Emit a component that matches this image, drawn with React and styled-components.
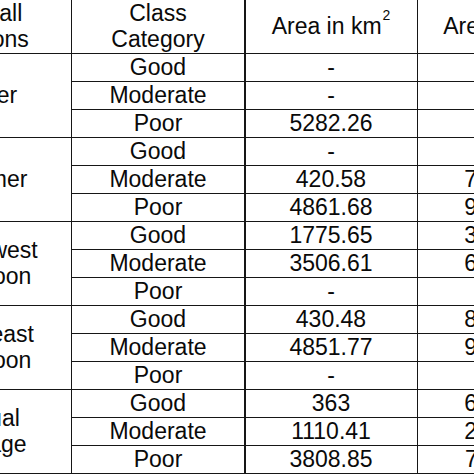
import React from 'react'
import styled, { createGlobalStyle } from 'styled-components'

const GlobalStyle = createGlobalStyle`
    html, body {
        margin: 0;
        padding: 0;
        background: #ffffff;
        overflow: hidden;
    }
`

const Page = styled.div`
    width: 474px;
    height: 474px;
    overflow: hidden;
`

// the table is cropped on the left and top in the screenshot
const Sheet = styled.div`
    margin: -2px 0 0 -104px;
    display: grid;
    grid-template-columns: 173px 172px 171px 150px;
    grid-template-rows: 53px repeat(15, 26.5px);
    gap: 1.5px;
    padding: 1.5px;
    width: max-content;
    background: #161616;
    font-family: "Liberation Sans", Arial, sans-serif;
    font-size: 23px;
    color: #0a0a0a;
`

const Cell = styled.div`
    background: #ffffff;
    display: flex;
    align-items: center;
    justify-content: center;
    text-align: center;
    line-height: 26px;
    white-space: nowrap;
`

const GroupCell = styled(Cell)`
    grid-row: span ${props => props.span};
`

const Sup = styled.sup`
    font-size: 14px;
    line-height: 0;
    vertical-align: baseline;
    position: relative;
    top: -11px;
    margin-left: 1px;
`

const seasons = [
    {
        name: ['Winter'],
        rows: [
            ['Good', '-', '-'],
            ['Moderate', '-', '-'],
            ['Poor', '5282.26', '100'],
        ],
    },
    {
        name: ['Summer'],
        rows: [
            ['Good', '-', '-'],
            ['Moderate', '420.58', '7.962'],
            ['Poor', '4861.68', '92.04'],
        ],
    },
    {
        name: ['Southwest', 'Monsoon'],
        rows: [
            ['Good', '1775.65', '33.62'],
            ['Moderate', '3506.61', '66.38'],
            ['Poor', '-', '-'],
        ],
    },
    {
        name: ['Northeast', 'Monsoon'],
        rows: [
            ['Good', '430.48', '8.150'],
            ['Moderate', '4851.77', '91.85'],
            ['Poor', '-', '-'],
        ],
    },
    {
        name: ['Annual', 'Average'],
        rows: [
            ['Good', '363', '6.872'],
            ['Moderate', '1110.41', '21.02'],
            ['Poor', '3808.85', '72.11'],
        ],
    },
]

const App = () => {
    return (
        <Page>
            <GlobalStyle />
            <Sheet>
                <Cell>Rainfall<br />Seasons</Cell>
                <Cell>Class<br />Category</Cell>
                <Cell>Area in km<Sup>2</Sup></Cell>
                <Cell>Area in %</Cell>
                {seasons.map(season => (
                    <React.Fragment key={season.name.join(' ')}>
                        <GroupCell span={3}>
                            {season.name[0]}
                            {season.name[1] && <><br />{season.name[1]}</>}
                        </GroupCell>
                        {season.rows.map((row, i) => (
                            <React.Fragment key={i}>
                                <Cell>{row[0]}</Cell>
                                <Cell>{row[1]}</Cell>
                                <Cell>{row[2]}</Cell>
                            </React.Fragment>
                        ))}
                    </React.Fragment>
                ))}
            </Sheet>
        </Page>
    )
}

export default App
